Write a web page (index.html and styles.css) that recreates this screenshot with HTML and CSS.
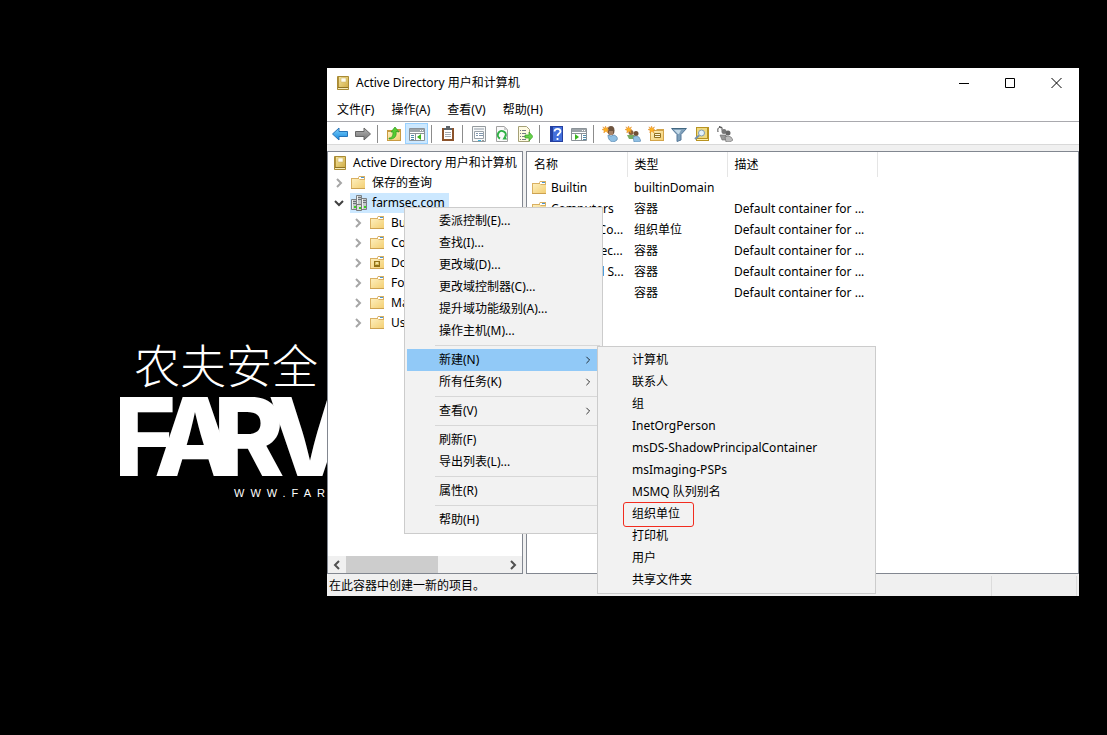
FILE: index.html
```html
<!DOCTYPE html>
<html lang="zh-CN">
<head>
    <meta charset="UTF-8">
    <meta name="viewport" content="width=device-width, initial-scale=1.0">
    <title>Active Directory 用户和计算机</title>
    <link rel="stylesheet" href="styles.css">
</head>
<body>
    <!-- Icons -->
    <svg class="sprite" aria-hidden="true">
        <defs>
            <linearGradient id="gold" x1="0" y1="0" x2="1" y2="1">
                <stop offset="0" stop-color="#fdeebb"/><stop offset="1" stop-color="#f3cf74"/>
            </linearGradient>
            <linearGradient id="cover" x1="0" y1="0" x2="1" y2="1">
                <stop offset="0" stop-color="#f6e7a4"/><stop offset="1" stop-color="#cda83c"/>
            </linearGradient>
            <linearGradient id="blue" x1="0" y1="0" x2="0" y2="1">
                <stop offset="0" stop-color="#7ed0fb"/><stop offset="1" stop-color="#168ade"/>
            </linearGradient>
            <linearGradient id="gray" x1="0" y1="0" x2="0" y2="1">
                <stop offset="0" stop-color="#b5b5b5"/><stop offset="1" stop-color="#757575"/>
            </linearGradient>
        </defs>
        <symbol id="i-book" viewBox="0 0 16 16">
            <path fill="url(#cover)" stroke="#a98b35" d="M2.500 1.500h11v13h-11z"/>
            <path fill="#b3923a" d="M3 2h1v10H3z"/>
            <path fill="#fffdf0" stroke="#c7ad5c" stroke-width=".5" d="M6 3h5v4H6z"/>
            <path fill="#8f7424" d="M3 12h10v1H3z"/>
            <path fill="#f7ecba" d="M3 13h10v1H3z"/>
        </symbol>
        <symbol id="i-folder" viewBox="0 0 16 16">
            <path fill="#d9b062" d="M1 3h7l1-2h6v13H1z"/>
            <path fill="#fff" d="M9 2h5v2H9z"/>
            <path fill="#4b96d1" d="M11 2h3v1h-3z"/>
            <path fill="url(#gold)" d="M2 4h7l1 1h5v8H2z"/>
            <path fill="#cda250" d="M1 13h14v1H1z"/>
        </symbol>
        <symbol id="i-ou" viewBox="0 0 16 16">
            <use href="#i-folder"/>
            <path fill="#927117" d="M5 6h6v6H5z"/><path fill="#d8be62" d="M6 7h4v3H6z"/>
            <path fill="#f4e3a0" d="M7 7h2v2H7z"/>
        </symbol>
        <symbol id="i-domain" viewBox="0 0 16 16">
            <path fill="#c3c8ca" stroke="#7b8083" d="M5.500.5h5v9h-5zM.5 4.500h5v10h-5zM10.500 3.500h5v11h-5z"/>
            <path fill="#eef0f0" d="M6 1h1v8H6zM1 5h1v9H1zM11 4h1v10h-1z"/>
            <path stroke="#6c7276" d="M7 2.500h3M7 4.500h3M2 6.500h3M2 8.500h3M12 5.500h3M12 7.500h3"/>
            <path fill="#d9dddd" stroke="#777" d="M5.500 9.500h5v6h-5z"/>
            <path fill="#37d51b" d="M3 11h2v2H3zM8 12h2v2H8zM13 11h2v2h-2z"/>
        </symbol>
        <symbol id="i-back" viewBox="0 0 16 16">
            <path fill="url(#blue)" stroke="#2673b8" stroke-linejoin="round" d="M.5 8 7 2v3.500h8.500v5H7V14z"/>
        </symbol>
        <symbol id="i-forward" viewBox="0 0 16 16">
            <path fill="url(#gray)" stroke="#666" stroke-linejoin="round" d="M15.500 8 9 2v3.500H.5v5H9V14z"/>
        </symbol>
        <symbol id="i-up" viewBox="0 0 16 16">
            <path fill="#c99b42" d="M1 4h6l1-1h7v12H1z"/><path fill="url(#gold)" d="M2 6h12v8H2z"/>
            <path fill="#56cc31" stroke="#2d9b20" stroke-width=".7" d="M3 12c3 0 4-2 4-6L5 6l4-5 4 5-3-.5c1 5-2 8-7 7.500z"/>
        </symbol>
        <symbol id="i-console" viewBox="0 0 16 16">
            <path fill="#fff" stroke="#8b9298" d="M.5 2.500h15v12H.5z"/>
            <path fill="#9da4a9" d="M1 3h14v3H1z"/><path fill="#fff" d="M11 4h1v1h-1zM13 4h1v1h-1z"/>
            <path stroke="#8b9298" d="M0 7.500h16M6.500 7v8"/>
            <path stroke="#4f8baa" d="M2 9.500h3M2 11.500h3M2 13.500h3"/>
            <path fill="#3cb51f" d="M12 8v6l-4-3z"/>
        </symbol>
        <symbol id="i-panel" viewBox="0 0 16 16">
            <path fill="#fff" stroke="#8b9298" d="M.5 2.500h15v12H.5z"/>
            <path fill="#9da4a9" d="M1 3h14v3H1z"/><path fill="#fff" d="M11 4h1v1h-1zM13 4h1v1h-1z"/>
            <path stroke="#8b9298" d="M0 7.500h16M10.500 7v8"/>
            <path stroke="#4f8baa" d="M12 9.500h3M12 11.500h3M12 13.500h3"/>
            <path fill="#3cb51f" d="M4 8v6l4-3z"/>
        </symbol>
        <symbol id="i-clipboard" viewBox="0 0 16 16">
            <path fill="#8c532b" d="M2 2h12v13H2z"/><path fill="#fff" d="M4 4h8v9H4z"/>
            <path fill="#5f656b" d="M6 0h4v2h2v2H4V2h2z"/>
            <path stroke="#a4abb3" d="M5 6.500h6M5 8.500h6M5 10.500h6"/>
        </symbol>
        <symbol id="i-props" viewBox="0 0 16 16">
            <path fill="#f8f9f9" stroke="#959b9f" d="M1.500.5h13v15h-13z"/>
            <path fill="#c4cad0" d="M3 2h10v2H3z"/>
            <path fill="#fff" stroke="#9aa2a9" d="M3.500 5.500h9v7h-9z"/>
            <path stroke="#8197ad" d="M5 7.500h2M8 7.500h4M5 9.500h2M8 9.500h4"/>
            <path stroke="#31b4df" d="M7 14.500h3"/><path stroke="#999" d="M11 14.500h2"/>
        </symbol>
        <symbol id="i-refresh" viewBox="0 0 16 16">
            <path fill="#fafafa" stroke="#a2a2a2" d="M2.500.5h8l3 3v12h-11z"/><path fill="#ccc" d="M10 0v4h4z"/>
            <path fill="none" stroke="#2fb045" stroke-width="2" d="M6 12.500a4 4 0 1 1 5.500-2"/>
            <path fill="#2fb045" d="M13 13.500H8.500L11 9z"/>
        </symbol>
        <symbol id="i-export" viewBox="0 0 16 16">
            <path fill="#fffbe2" stroke="#a5a077" d="M1.500.5h8l3 3v12h-11z"/>
            <path stroke="#777d8a" d="M3 4.500h1M5 4.500h4M3 7.500h1M5 7.500h4M3 10.500h1M5 10.500h3M3 13.500h1M5 13.500h4"/>
            <path fill="#66d24a" stroke="#369e26" stroke-width=".7" d="M8 9h4V6l4 4.500-4 4.500v-3H8z"/>
        </symbol>
        <symbol id="i-help" viewBox="0 0 16 16">
            <path fill="#2540a0" d="M2 0h13v16H2z"/><path fill="#4370dc" d="M5 1h9v14H5z"/>
            <path fill="none" stroke="#fff" stroke-width="1.800" d="M6.500 5.500c0-3.500 6-3.500 6 0 0 2-3 2-3 4.500M9.500 12v2"/>
        </symbol>
        <symbol id="i-star" viewBox="0 0 8 8">
            <path fill="#ffb320" stroke="#df8420" stroke-width=".5" d="M4 0l1 2.500L7.500 1 6 3.500 8 4.500 6 5 7 8 4.500 6 2 8l.5-3L0 4l2.500-.5L1 1l2.500 1.500z"/>
        </symbol>
        <symbol id="i-user" viewBox="0 0 16 16">
            <ellipse cx="9" cy="4.500" rx="3.500" ry="4.500" fill="#6f5540"/><path fill="#a68267" d="M7 5h4v4H7z"/>
            <path fill="#8fbfe3" stroke="#5181aa" stroke-width=".7" d="M6 9l3 1 3-1c3 1 4 3 3 5l-3 2c-4 0-6-3-6-7z"/>
            <use href="#i-star" width="7" height="7"/>
        </symbol>
        <symbol id="i-group" viewBox="0 0 16 16">
            <circle cx="6" cy="6.500" r="2.500" fill="#8a6139"/><path fill="#78ad61" d="M2 9h7l2 4H4z"/>
            <circle cx="11" cy="7.500" r="2.500" fill="#705036"/><path fill="#8fbfe3" stroke="#5585ac" stroke-width=".6" d="M8 11l3-1 3 1 2 4-3 1H9z"/>
            <use href="#i-star" width="7" height="7"/>
        </symbol>
        <symbol id="i-newou" viewBox="0 0 16 16">
            <path fill="#d3a449" d="M2 4h6l1-1h7v12H2z"/><path fill="url(#gold)" d="M3 5h12v9H3z"/>
            <path fill="#fff6d8" stroke="#917021" d="M6.500 7.500h6v4h-6z"/><path stroke="#917021" d="M7 9.500h5"/>
            <use href="#i-star" width="7" height="7"/>
        </symbol>
        <symbol id="i-filter" viewBox="0 0 16 16">
            <path fill="#7fa0ba" stroke="#56799a" d="M.5 2.500h15L10 8.500V14l-4 1.500v-7z"/>
            <path fill="#c5dae8" d="M3 4h7L8 8H7z"/><path fill="#426780" d="M1 2h14v1H1z"/>
        </symbol>
        <symbol id="i-find" viewBox="0 0 16 16">
            <path fill="#b99422" d="M2 1h13v14H2z"/><path fill="#efd980" d="M3 2h10v10H3z"/>
            <path fill="#fff1ad" d="M3 13h11v1H3z"/>
            <circle cx="7.500" cy="7" r="3" fill="#e4f2fb" stroke="#7f9bb3"/>
            <path stroke="#7592ae" stroke-width="2" d="M5 9.500 1 13"/>
        </symbol>
        <symbol id="i-query" viewBox="0 0 16 16">
            <path fill="none" stroke="#444" d="M1 6C0 1 3 1 4 2M2 .5l3 1v3"/>
            <circle cx="7" cy="5.500" r="2.500" fill="#777"/><path fill="#999" stroke="#666" stroke-width=".6" d="M3 9h6l1 5H5z"/>
            <circle cx="11" cy="7" r="2.500" fill="#666"/><path fill="#bbb" stroke="#666" stroke-width=".6" d="M8 11l3-1 3 1 2 3-3 2H9z"/>
        </symbol>
        <symbol id="i-right" viewBox="0 0 10 10"><path fill="none" stroke="currentColor" d="M3 1l4 4-4 4"/></symbol>
        <symbol id="i-left" viewBox="0 0 10 10"><path fill="none" stroke="currentColor" d="M7 1 3 5l4 4"/></symbol>
        <symbol id="i-down" viewBox="0 0 10 10"><path fill="none" stroke="currentColor" d="M1 3l4 4 4-4"/></symbol>
    </svg>

    <!-- Wallpaper -->
    <div class="wallpaper">
        <svg class="logo" width="300" height="170" viewBox="0 0 300 170" role="img" aria-label="农夫安全">
            <text class="logo-cn" x="14" y="53">农夫安全</text>
            <text class="logo-name" y="146"><tspan x="-7">F</tspan><tspan x="34">A</tspan><tspan x="93">R</tspan><tspan x="148">V</tspan></text>
            <text class="logo-url" x="114" y="167">WWW.FAR</text>
        </svg>
    </div>

    <main class="window">
        <header class="titlebar">
            <svg class="icon"><use href="#i-book"/></svg>
            <h1>Active Directory 用户和计算机</h1>
            <button class="caption" aria-label="最小化"><svg width="11" height="11"><path d="M0 5.500h10"/></svg></button>
            <button class="caption" aria-label="最大化"><svg width="11" height="11"><path d="M.5.5h9v9h-9z"/></svg></button>
            <button class="caption" aria-label="关闭"><svg width="11" height="11"><path d="M.5 0l10 10M10.500 0l-10 10"/></svg></button>
        </header>

        <nav class="menubar">
            <button>文件(F)</button>
            <button>操作(A)</button>
            <button>查看(V)</button>
            <button>帮助(H)</button>
        </nav>

        <div class="toolbar">
            <button aria-label="后退"><svg class="icon"><use href="#i-back"/></svg></button>
            <button aria-label="前进"><svg class="icon"><use href="#i-forward"/></svg></button>
            <span class="divider"></span>
            <button aria-label="向上"><svg class="icon"><use href="#i-up"/></svg></button>
            <button class="pressed" aria-label="控制台树"><svg class="icon"><use href="#i-console"/></svg></button>
            <span class="divider"></span>
            <button aria-label="粘贴"><svg class="icon"><use href="#i-clipboard"/></svg></button>
            <span class="divider"></span>
            <button aria-label="属性"><svg class="icon"><use href="#i-props"/></svg></button>
            <button aria-label="刷新"><svg class="icon"><use href="#i-refresh"/></svg></button>
            <button aria-label="导出列表"><svg class="icon"><use href="#i-export"/></svg></button>
            <span class="divider"></span>
            <button aria-label="帮助"><svg class="icon"><use href="#i-help"/></svg></button>
            <button aria-label="操作窗格"><svg class="icon"><use href="#i-panel"/></svg></button>
            <span class="divider"></span>
            <button aria-label="新建用户"><svg class="icon"><use href="#i-user"/></svg></button>
            <button aria-label="新建组"><svg class="icon"><use href="#i-group"/></svg></button>
            <button aria-label="新建组织单位"><svg class="icon"><use href="#i-newou"/></svg></button>
            <button aria-label="筛选"><svg class="icon"><use href="#i-filter"/></svg></button>
            <button aria-label="查找"><svg class="icon"><use href="#i-find"/></svg></button>
            <button aria-label="添加到组"><svg class="icon"><use href="#i-query"/></svg></button>
        </div>

        <div class="panes">
            <section class="tree-pane">
                <ul class="tree">
                    <li class="root"><svg class="icon"><use href="#i-book"/></svg><span>Active Directory 用户和计算机</span></li>
                    <li><svg class="arrow"><use href="#i-right"/></svg><svg class="icon"><use href="#i-folder"/></svg><span>保存的查询</span></li>
                    <li><svg class="arrow open"><use href="#i-down"/></svg><span class="selected"><svg class="icon"><use href="#i-domain"/></svg>farmsec.com</span></li>
                    <li class="child"><svg class="arrow"><use href="#i-right"/></svg><svg class="icon"><use href="#i-folder"/></svg><span>Builtin</span></li>
                    <li class="child"><svg class="arrow"><use href="#i-right"/></svg><svg class="icon"><use href="#i-folder"/></svg><span>Computers</span></li>
                    <li class="child"><svg class="arrow"><use href="#i-right"/></svg><svg class="icon"><use href="#i-ou"/></svg><span>Domain Controllers</span></li>
                    <li class="child"><svg class="arrow"><use href="#i-right"/></svg><svg class="icon"><use href="#i-folder"/></svg><span>ForeignSecurityPrincipals</span></li>
                    <li class="child"><svg class="arrow"><use href="#i-right"/></svg><svg class="icon"><use href="#i-folder"/></svg><span>Managed Service Accounts</span></li>
                    <li class="child"><svg class="arrow"><use href="#i-right"/></svg><svg class="icon"><use href="#i-folder"/></svg><span>Users</span></li>
                </ul>
                <div class="scrollbar">
                    <svg class="arrow"><use href="#i-left"/></svg>
                    <div class="track"><div class="thumb"></div></div>
                    <svg class="arrow"><use href="#i-right"/></svg>
                </div>
            </section>

            <section class="list-pane">
                <table>
                    <thead>
                        <tr><th class="col-name">名称</th><th class="col-type">类型</th><th class="col-desc">描述</th></tr>
                    </thead>
                    <tbody>
                        <tr><td><svg class="icon"><use href="#i-folder"/></svg>Builtin</td><td>builtinDomain</td><td></td></tr>
                        <tr><td><svg class="icon"><use href="#i-folder"/></svg>Computers</td><td>容器</td><td>Default container for ...</td></tr>
                        <tr><td><svg class="icon"><use href="#i-ou"/></svg>Domain Co...</td><td>组织单位</td><td>Default container for ...</td></tr>
                        <tr><td><svg class="icon"><use href="#i-folder"/></svg>ForeignSec...</td><td>容器</td><td>Default container for ...</td></tr>
                        <tr><td><svg class="icon"><use href="#i-folder"/></svg>Managed S...</td><td>容器</td><td>Default container for ...</td></tr>
                        <tr><td><svg class="icon"><use href="#i-folder"/></svg>Users</td><td>容器</td><td>Default container for ...</td></tr>
                    </tbody>
                </table>
            </section>
        </div>

        <footer class="statusbar">
            <span class="status-text">在此容器中创建一新的项目。</span>
            <span class="status-cell"></span>
        </footer>

        <!-- Context menu of farmsec.com -->
        <ul class="menu context-menu">
            <li><button>委派控制(E)...</button></li>
            <li><button>查找(I)...</button></li>
            <li><button>更改域(D)...</button></li>
            <li><button>更改域控制器(C)...</button></li>
            <li><button>提升域功能级别(A)...</button></li>
            <li><button>操作主机(M)...</button></li>
            <li class="separator"></li>
            <li class="has-submenu">
                <button class="active">新建(N)<svg class="arrow"><use href="#i-right"/></svg></button>
                <ul class="menu submenu">
                    <li><button>计算机</button></li>
                    <li><button>联系人</button></li>
                    <li><button>组</button></li>
                    <li><button>InetOrgPerson</button></li>
                    <li><button>msDS-ShadowPrincipalContainer</button></li>
                    <li><button>msImaging-PSPs</button></li>
                    <li><button>MSMQ 队列别名</button></li>
                    <li><button class="marked">组织单位</button></li>
                    <li><button>打印机</button></li>
                    <li><button>用户</button></li>
                    <li><button>共享文件夹</button></li>
                </ul>
            </li>
            <li><button>所有任务(K)<svg class="arrow"><use href="#i-right"/></svg></button></li>
            <li class="separator"></li>
            <li><button>查看(V)<svg class="arrow"><use href="#i-right"/></svg></button></li>
            <li class="separator"></li>
            <li><button>刷新(F)</button></li>
            <li><button>导出列表(L)...</button></li>
            <li class="separator"></li>
            <li><button>属性(R)</button></li>
            <li class="separator"></li>
            <li><button>帮助(H)</button></li>
        </ul>
    </main>
</body>
</html>
```
FILE: styles.css
```css
*,
*::before,
*::after {
    box-sizing: border-box;
}

body {
    margin: 0;
    min-height: 100vh;
    position: relative;
    overflow: hidden;
    background-color: #000;
    color: #000;
    font-family: "Noto Sans", "Noto Sans CJK SC", sans-serif;
    font-size: 12px;
    line-height: 20px;
}

button {
    padding: 0;
    border: none;
    background: none;
    color: inherit;
    font: inherit;
}

ul {
    margin: 0;
    padding: 0;
    list-style: none;
}

.sprite {
    position: absolute;
    width: 0;
    height: 0;
}

.icon {
    flex: none;
    width: 16px;
    height: 16px;
}

.arrow {
    flex: none;
    width: 10px;
    height: 10px;
    stroke-width: 2px;
}

/* Wallpaper */
.wallpaper {
    position: absolute;
    left: 120px;
    top: 330px;
}

.logo {
    display: block;
    fill: #fff;
}

.logo-cn {
    font-family: "Noto Sans CJK SC", sans-serif;
    font-size: 46px;
    font-weight: 300;
}

.logo-name {
    font-family: Inter, sans-serif;
    font-size: 108px;
    font-weight: 800;
}

.logo-url {
    font-family: "Liberation Sans", sans-serif;
    font-size: 11px;
    letter-spacing: 6px;
}

/* Window */
.window {
    position: absolute;
    top: 68px;
    right: 28px;
    bottom: 139px;
    left: 327px;
    display: flex;
    flex-direction: column;
    background-color: #f0f0f0;
}

.titlebar {
    display: flex;
    align-items: center;
    height: 30px;
    padding-left: 8px;
    background-color: #fff;
}

.titlebar h1 {
    flex: 1;
    margin: 0 0 0 5px;
    font-size: 12px;
    font-weight: normal;
}

.caption {
    display: flex;
    align-items: center;
    justify-content: center;
    width: 46px;
    height: 30px;
}

.caption svg {
    fill: none;
    stroke: #000;
}

.menubar {
    display: flex;
    gap: 17px;
    height: 24px;
    padding: 2px 10px;
    background-color: #fff;
    border-bottom: 1px solid #a9a9ae;
}

.toolbar {
    display: flex;
    align-items: center;
    height: 23px;
    padding: 1px 1px 0;
    background-color: #fff;
    border-bottom: 1px solid #d9d9d9;
}

.toolbar button {
    display: flex;
    align-items: center;
    justify-content: center;
    width: 23px;
    height: 21px;
}

.toolbar .pressed {
    background-color: #cce8ff;
    border: 1px solid #99d1ff;
}

.divider {
    width: 1px;
    height: 18px;
    margin: 0 4px 0 3px;
    background-color: #8c8c8c;
}

.panes {
    flex: 1;
    display: grid;
    grid-template-columns: 196px 1fr;
    gap: 3px;
    min-height: 0;
    padding-top: 6px;
}

.tree-pane,
.list-pane {
    background-color: #fff;
    border: 1px solid #828790;
    overflow: hidden;
}

.tree-pane {
    display: flex;
    flex-direction: column;
}

/* Tree */
.tree {
    flex: 1;
    padding-top: 1px;
}

.tree li {
    display: flex;
    align-items: center;
    gap: 6px;
    height: 20px;
    padding-left: 6px;
    white-space: nowrap;
}

.tree .root {
    gap: 5px;
    padding-left: 4px;
}

.tree .child {
    padding-left: 25px;
}

.tree .arrow {
    color: #a6a6a6;
}

.tree .open {
    color: #404040;
}

.selected {
    display: flex;
    align-items: center;
    gap: 5px;
    padding: 0 4px 0 1px;
    background-color: #cce8ff;
}

.scrollbar {
    display: flex;
    align-items: center;
    gap: 4px;
    height: 17px;
    padding: 0 4px;
    background-color: #f0f0f0;
    color: #505050;
}

.track {
    flex: 1;
}

.thumb {
    width: 58%;
    height: 17px;
    background-color: #cdcdcd;
}

/* Object list */
.list-pane table {
    table-layout: fixed;
    width: 350px;
    border-collapse: collapse;
}

.list-pane th {
    height: 25px;
    padding: 0 7px;
    border-right: 1px solid #e5e5e5;
    text-align: left;
    font-weight: normal;
}

.list-pane td {
    height: 21px;
    padding: 0 7px;
    white-space: nowrap;
    line-height: 20px;
}

.list-pane td:first-child {
    padding: 0 0 0 4px;
}

.list-pane td .icon {
    margin-right: 4px;
    vertical-align: middle;
}

.col-name,
.col-type {
    width: 100px;
}

.col-desc {
    width: 150px;
}

.statusbar {
    display: flex;
    height: 22px;
    padding: 2px 2px 0;
}

.status-text {
    flex: 1;
}

.status-cell {
    width: 86px;
    border: 1px solid #dcdcdc;
    border-width: 0 1px;
}

/* Menus */
.menu {
    position: absolute;
    padding: 2px;
    background-color: #f2f2f2;
    border: 1px solid #ccc;
}

.menu button {
    display: flex;
    align-items: center;
    justify-content: space-between;
    width: 100%;
    height: 22px;
    padding: 0 8px 0 32px;
    white-space: nowrap;
}

.menu .arrow {
    width: 8px;
    height: 8px;
    stroke-width: 1px;
}

.context-menu {
    top: 139px;
    left: 77px;
    width: 199px;
}

.submenu {
    top: -3px;
    left: 190px;
    width: 279px;
}

.has-submenu {
    position: relative;
}

.menu .active {
    background-color: #91c9f7;
}

.separator {
    height: 7px;
    margin-left: 28px;
    padding-top: 3px;
}

.separator::before {
    content: "";
    display: block;
    height: 1px;
    background-color: #d7d7d7;
}

.marked {
    position: relative;
}

.marked::after {
    content: "";
    position: absolute;
    top: -1px;
    left: 23px;
    width: 71px;
    height: 25px;
    border: 1px solid #f22c1f;
    border-radius: 3px;
}
```
